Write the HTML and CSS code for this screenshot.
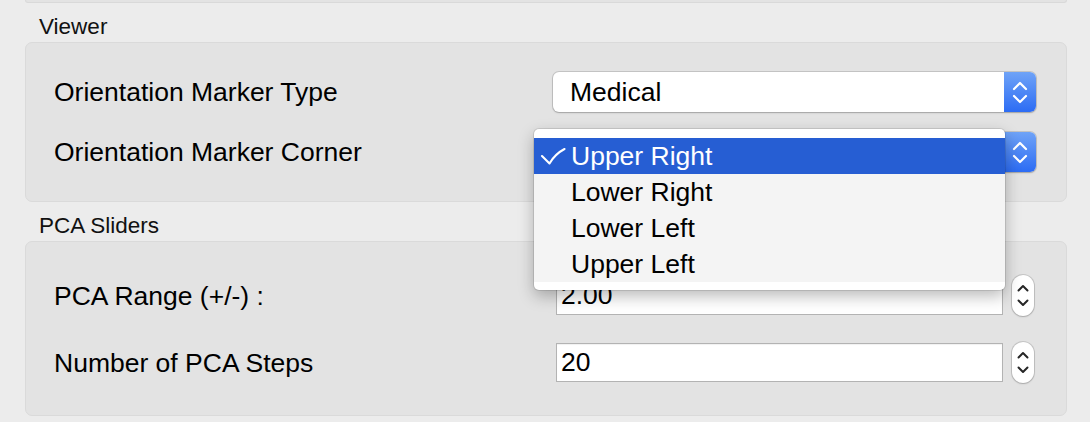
FILE: index.html
```html
<!DOCTYPE html>
<html lang="en">
<head>
<meta charset="utf-8">
<title>Settings</title>
<link rel="stylesheet" href="styles.css">
</head>
<body>
<div class="window">
  <div class="top-stub"></div>

  <div class="group-title">Viewer</div>
  <div class="group group-viewer">
    <div class="form viewer-form">
      <div class="label">Orientation Marker Type</div>
      <div class="combo">
        <span class="combo-text">Medical</span>
        <span class="combo-btn">
          <svg width="32" height="40" viewBox="0 0 32 40"><path d="M10 17 L16 11 L22 17 M10 24 L16 30 L22 24" fill="none" stroke="#fff" stroke-width="2.2" stroke-linecap="round" stroke-linejoin="round"/></svg>
        </span>
      </div>

      <div class="label">Orientation Marker Corner</div>
      <div class="combo-wrap">
        <div class="combo">
          <span class="combo-text"></span>
          <span class="combo-btn">
            <svg width="32" height="40" viewBox="0 0 32 40"><path d="M10 17 L16 11 L22 17 M10 24 L16 30 L22 24" fill="none" stroke="#fff" stroke-width="2.2" stroke-linecap="round" stroke-linejoin="round"/></svg>
          </span>
        </div>
        <div class="popup">
          <div class="menu">
            <div class="item selected">
              <span class="check"><svg width="26" height="17" viewBox="0 0 26 17"><path d="M2 8 L9.5 15.5 Q15 6 24.5 1" fill="none" stroke="#fff" stroke-width="2.1" stroke-linecap="round" stroke-linejoin="round"/></svg></span>
              <span class="item-text">Upper Right</span>
            </div>
            <div class="item"><span class="check"></span><span class="item-text">Lower Right</span></div>
            <div class="item"><span class="check"></span><span class="item-text">Lower Left</span></div>
            <div class="item"><span class="check"></span><span class="item-text">Upper Left</span></div>
          </div>
        </div>
      </div>
    </div>
  </div>

  <div class="group-title">PCA Sliders</div>
  <div class="group group-pca">
    <div class="form pca-form">
      <div class="label">PCA Range (+/-) :</div>
      <div class="spin">
        <div class="field">2.00</div>
        <div class="stepper">
          <svg width="22" height="41" viewBox="0 0 22 41"><path d="M6.5 15.5 L11 11 L15.5 15.5 M6.5 25.5 L11 30 L15.5 25.5" fill="none" stroke="#262626" stroke-width="2" stroke-linecap="round" stroke-linejoin="round"/></svg>
        </div>
      </div>

      <div class="label">Number of PCA Steps</div>
      <div class="spin">
        <div class="field">20</div>
        <div class="stepper">
          <svg width="22" height="41" viewBox="0 0 22 41"><path d="M6.5 15.5 L11 11 L15.5 15.5 M6.5 25.5 L11 30 L15.5 25.5" fill="none" stroke="#262626" stroke-width="2" stroke-linecap="round" stroke-linejoin="round"/></svg>
        </div>
      </div>
    </div>
  </div>
</div>
</body>
</html>
```

FILE: styles.css
```css
* {
  box-sizing: border-box;
}

html, body {
  margin: 0;
  padding: 0;
  background: #ececec;
}

body {
  font-family: "Liberation Sans", Arial, sans-serif;
  color: #000;
  width: 1090px;
  height: 422px;
  overflow: hidden;
}

.window {
  padding: 0 23px 0 25px;
}

.top-stub {
  height: 3px;
  background: #e3e3e3;
  border: 1px solid #d9d9d9;
  border-top: none;
  border-radius: 0 0 6px 6px;
}

.group-title {
  font-size: 22.5px;
  line-height: 26px;
  padding: 11px 0 2px 14px;
  color: #111;
}

.group {
  background: #e3e3e3;
  border: 1px solid #dadada;
  border-radius: 7px;
}

.group-viewer {
  padding: 29px 30px 29px 28px;
}

.group-pca {
  padding: 33px 32px 32px 28px;
}

.form {
  display: grid;
  align-items: center;
}

.viewer-form {
  grid-template-columns: 1fr 483px;
  grid-auto-rows: 40px;
  row-gap: 20px;
}

.pca-form {
  grid-template-columns: 1fr 478px;
  grid-auto-rows: 41px;
  row-gap: 26px;
}

.label {
  font-size: 26.5px;
  line-height: 30px;
  color: #000;
}

.combo-wrap {
  position: relative;
  height: 40px;
}

.combo {
  display: flex;
  height: 40px;
  background: #fff;
  border-radius: 6px;
  box-shadow: 0 0 0 1px rgba(0, 0, 0, 0.13), 0 1px 2px rgba(0, 0, 0, 0.18);
}

.combo-text {
  flex: 1;
  display: flex;
  align-items: center;
  padding-left: 17px;
  font-size: 26.5px;
  color: #000;
}

.combo-btn {
  width: 32px;
  height: 40px;
  border-radius: 0 6px 6px 0;
  background: linear-gradient(#6fa3f7, #2c6cf4);
  display: block;
}

.combo-btn svg {
  display: block;
}

.popup {
  position: absolute;
  top: -3px;
  left: -19px;
  width: 471px;
  background: #fff;
  border-radius: 5px;
  padding: 9px 0 8px;
  box-shadow: 0 0 0 1px rgba(0, 0, 0, 0.1), 0 6px 16px rgba(0, 0, 0, 0.28);
  z-index: 2;
}

.menu {
  background: #f4f4f4;
}

.item {
  display: grid;
  grid-template-columns: 37px 1fr;
  align-items: center;
  height: 36px;
  font-size: 26.5px;
  color: #000;
}

.item.selected {
  background: #265ed3;
  color: #fff;
}

.check {
  display: flex;
  align-items: center;
  padding-left: 6px;
}

.check svg {
  display: block;
}

.spin {
  display: flex;
  align-items: center;
  gap: 9px;
}

.field {
  flex: 1;
  height: 39px;
  background: #fff;
  border: 1px solid #b3b3b3;
  box-shadow: inset 0 1px 1px rgba(0, 0, 0, 0.06);
  font-size: 26.5px;
  line-height: 37px;
  padding-left: 4px;
  color: #000;
}

.stepper {
  width: 22px;
  height: 41px;
  background: #fff;
  border-radius: 11px;
  box-shadow: 0 0 0 1px rgba(0, 0, 0, 0.13), 0 1px 2px rgba(0, 0, 0, 0.15);
}

.stepper svg {
  display: block;
}
```
